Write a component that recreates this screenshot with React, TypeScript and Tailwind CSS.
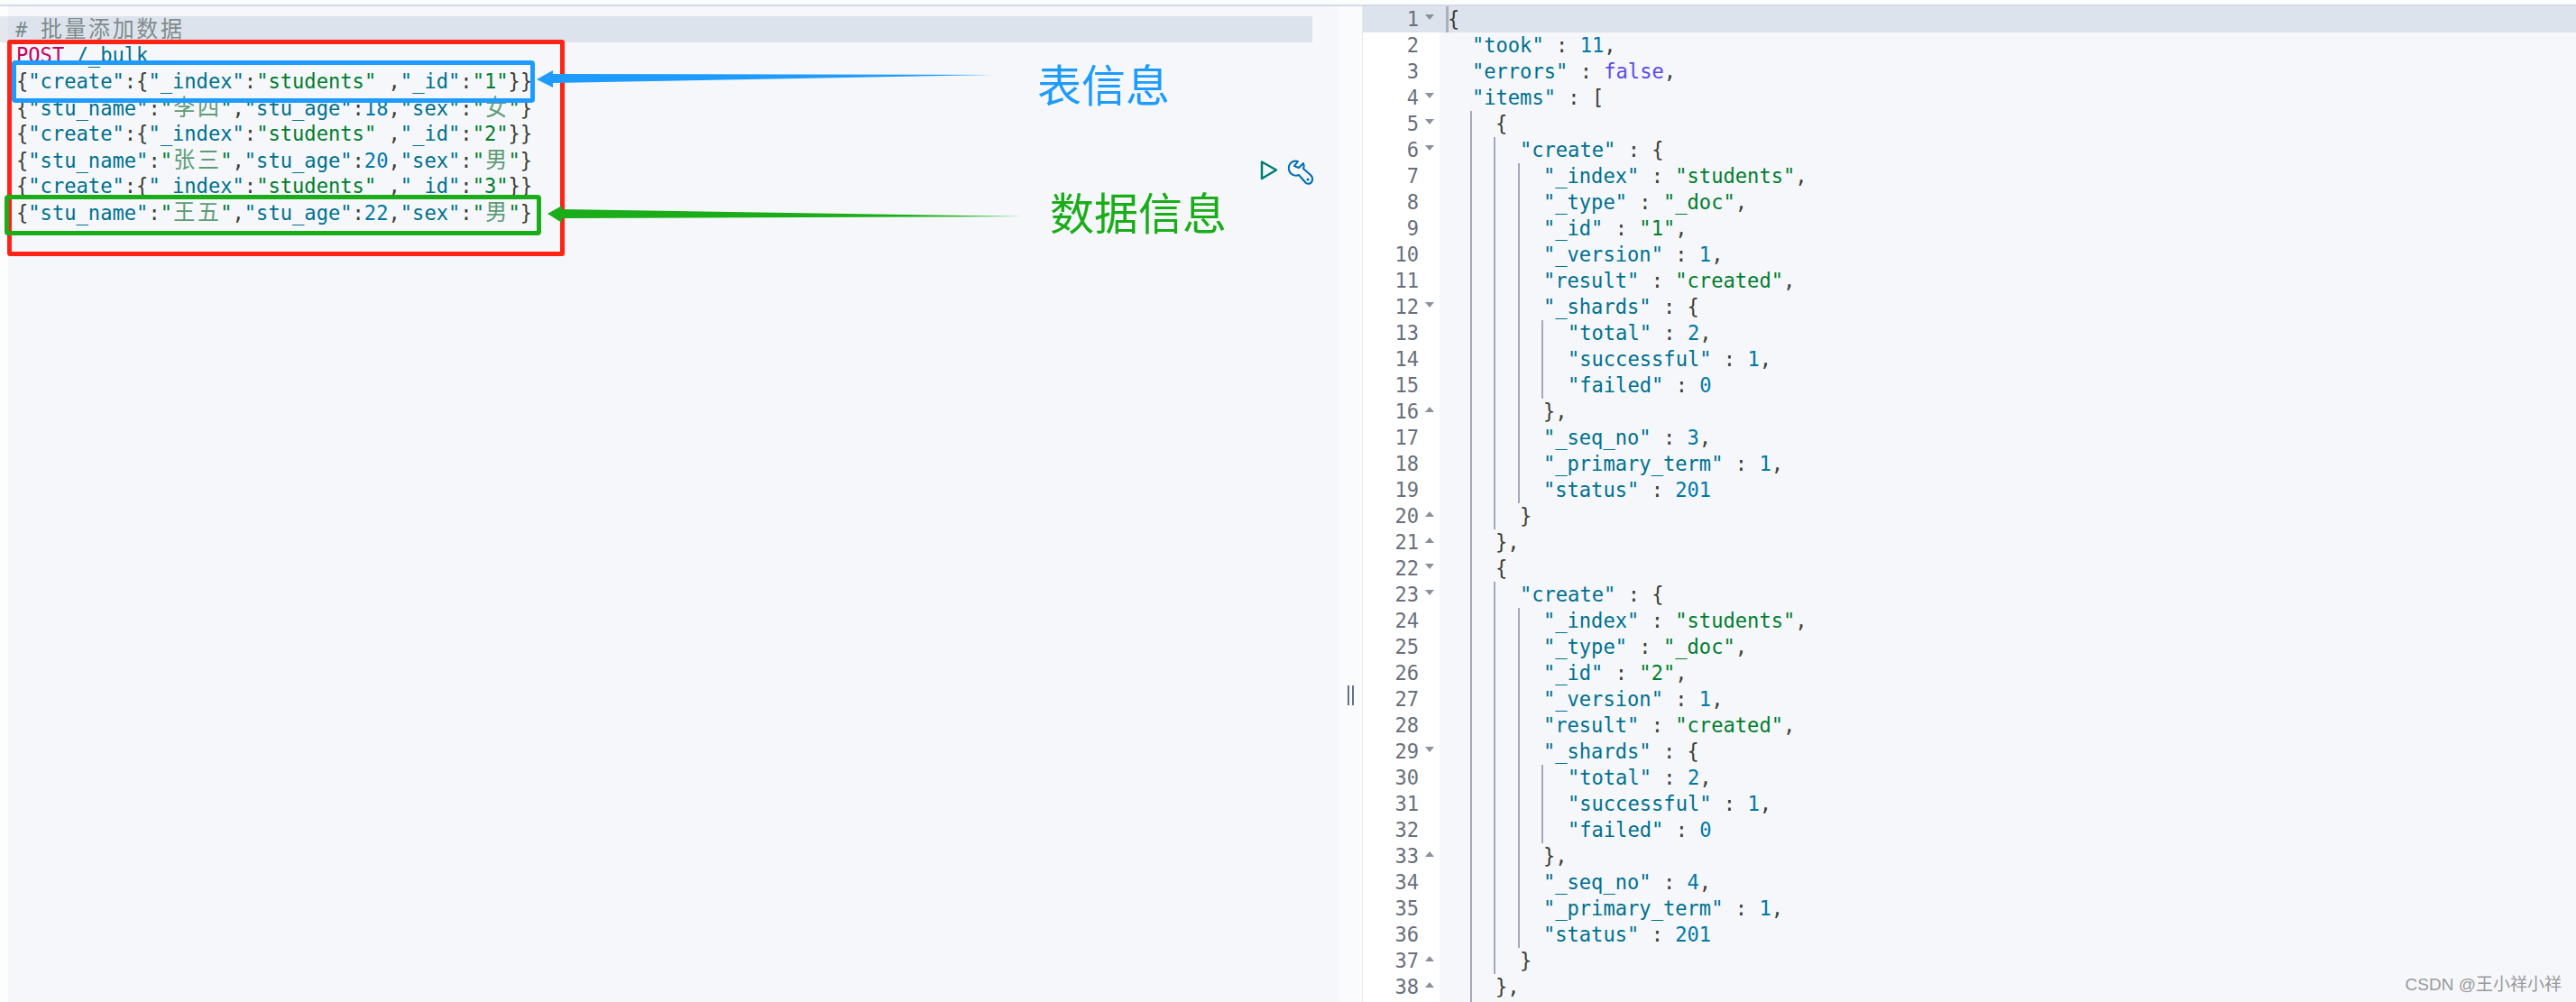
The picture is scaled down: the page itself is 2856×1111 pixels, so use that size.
import { Fragment, type ReactNode } from 'react'

const MONO = 'font-["DejaVu_Sans_Mono","Noto_Sans_CJK_SC",monospace]'

const REQUEST = [
  'POST /_bulk',
  '{"create":{"_index":"students" ,"_id":"1"}}',
  '{"stu_name":"李四","stu_age":18,"sex":"女"}',
  '{"create":{"_index":"students" ,"_id":"2"}}',
  '{"stu_name":"张三","stu_age":20,"sex":"男"}',
  '{"create":{"_index":"students" ,"_id":"3"}}',
  '{"stu_name":"王五","stu_age":22,"sex":"男"}',
]

// one create result, repeated for every document in the response
const itemLines = (id: string, seq: string): [number, string, string?][] => [
  [2, '{', 'down'],
  [3, '"create" : {', 'down'],
  [4, '"_index" : "students",'],
  [4, '"_type" : "_doc",'],
  [4, `"_id" : "${id}",`],
  [4, '"_version" : 1,'],
  [4, '"result" : "created",'],
  [4, '"_shards" : {', 'down'],
  [5, '"total" : 2,'],
  [5, '"successful" : 1,'],
  [5, '"failed" : 0'],
  [4, '},', 'up'],
  [4, `"_seq_no" : ${seq},`],
  [4, '"_primary_term" : 1,'],
  [4, '"status" : 201'],
  [3, '}', 'up'],
  [2, '},', 'up'],
]

const RESPONSE: [number, string, string?][] = [
  [0, '{', 'down'],
  [1, '"took" : 11,'],
  [1, '"errors" : false,'],
  [1, '"items" : [', 'down'],
  ...itemLines('1', '3'),
  ...itemLines('2', '4'),
  [2, '{', 'down'],
]

function Han({ ch, className }: { ch: string; className: string }) {
  return <span className={`inline-block w-[28.3px] text-center text-[25.5px] leading-[29px] ${className}`}>{ch}</span>
}

function colorize(line: string): ReactNode[] {
  const parts = line.match(/"[^"]*"(?=\s*:)|"[^"]*"|\b\d+\b|false|POST|\/_bulk|[^"\d]/g) ?? []
  return parts.map((part, i) => {
    let color = 'text-[#3f3d36]'
    if (part === 'POST') color = 'text-[#c8005f]'
    else if (part === '/_bulk') color = 'text-[#00708f]'
    else if (part === 'false') color = 'text-[#5a4be8]'
    else if (/^\d+$/.test(part)) color = 'text-[#0079a5]'
    else if (part.startsWith('"')) {
      const rest = line.slice(line.indexOf(part) + part.length)
      color = /^\s*:/.test(rest) ? 'text-[#00708f]' : 'text-[#017d2e]'
    }
    return (
      <span key={i} className={color}>
        {Array.from(part).map((ch, j) =>
          /[\u4e00-\u9fff]/.test(ch) ? <Han key={j} ch={ch} className="text-[#5f9c76]" /> : <Fragment key={j}>{ch}</Fragment>,
        )}
      </span>
    )
  })
}

function FoldArrow({ dir }: { dir: string }) {
  return (
    <svg width="10" height="6" viewBox="0 0 10 6" className="ml-[7px] mt-[-6px]">
      <path d={dir === 'down' ? 'M0 0H10L5 6Z' : 'M0 6H10L5 0Z'} fill="#8a919e" />
    </svg>
  )
}

function ResponseLine({ num, indent, text, fold }: { num: number; indent: number; text: string; fold?: string }) {
  const active = num === 1
  return (
    <div className={`flex h-[29px] ${active ? 'bg-[#dde3ec]' : ''}`}>
      <div className={`flex h-[29px] w-[85px] shrink-0 items-center ${active ? '' : 'bg-white'}`}>
        <span className="w-[62px] origin-right scale-x-[0.94] text-right text-[#69707d]">{num}</span>
        {fold && <FoldArrow dir={fold} />}
      </div>
      <div className={`ml-[7px] flex h-[29px] ${active ? 'relative' : ''}`}>
        {active && <div className="absolute left-0 top-0 h-[29px] w-[3px] bg-[#a9afbb]" />}
        {Array.from({ length: indent }).map((_, i) => (
          <span key={i} className={`block h-[29px] w-[26.6px] ${i > 0 ? 'border-l-2 border-[#a2a9b8]' : ''}`} />
        ))}
        <span className="inline-block origin-left scale-x-[0.94] whitespace-pre pl-[2px]">{colorize(text)}</span>
      </div>
    </div>
  )
}

export default function App() {
  return (
    <div className={`${MONO} h-[1111px] w-[2856px] overflow-hidden bg-[#f5f7fa] text-[23.5px] leading-[29px]`}>
      <div className="h-[7px] border-b-2 border-[#d3dae6] bg-[#fbfcfe]" />
      <div className="flex h-[1104px]">
        {/* console input */}
        <div className="relative flex w-[1484px] shrink-0">
          <div className="w-[9px] shrink-0 bg-[#fdfdfe] pt-[11px]">
            <div className="h-[29px] bg-[#e3e7ee]" />
          </div>
          <div className="w-[1446px] pt-[11px]">
            <div className="h-[29px] bg-[#dde3ec] pl-[8px]">
              <span className="inline-block origin-left scale-x-[0.94] whitespace-pre text-[#7a8a8a]">
                {'# '}
                {Array.from('批量添加数据').map((ch) => (
                  <Han key={ch} ch={ch} className="text-[#7f8c8c]" />
                ))}
              </span>
            </div>
            {REQUEST.map((line, i) => (
              <div key={i} className="h-[29px] pl-[9px]">
                <span className="inline-block origin-left scale-x-[0.94] whitespace-pre">{colorize(line)}</span>
              </div>
            ))}
          </div>

          {/* annotations drawn over the screenshot */}
          <div className="absolute left-[8px] top-[37px] h-[240px] w-[618px] rounded-[3px] border-[5px] border-[#ff2316]" />
          <div className="absolute left-[13px] top-[60px] h-[47px] w-[580px] rounded-[4px] border-[5px] border-[#1e9bff]" />
          <div className="absolute left-[5px] top-[209px] h-[45px] w-[595px] rounded-[4px] border-[5px] border-[#1aad19]" />
          <svg className="absolute left-0 top-[-7px]" width="1484" height="300">
            <polygon points="1101,83 613,82 613,78 595,88 613,97 613,92" fill="#1e9bff" />
            <polygon points="1134,240 623,232 623,228 607,237 623,247 623,242" fill="#1aad19" />
            <path d="M1399 179.5 L1415 188.5 L1399 198 Z" fill="none" stroke="#017d73" strokeWidth="2.5" strokeLinejoin="round" />
            <path
              d="M1439 179 C1433 177 1428 182 1429 188 C1430 193 1435 196 1440 194 L1448 203 C1451 205 1455 203 1455 199 C1455.5 197 1455 196 1453 194 L1445 187 C1446 185 1446 183 1445 181 L1440 186 L1435 184 Z"
              fill="none"
              stroke="#006bb4"
              strokeWidth="2"
              strokeLinejoin="round"
            />
            <circle cx="1450" cy="199" r="1.5" fill="#006bb4" />
          </svg>
          <span className="absolute left-[1150px] top-[55px] font-['Noto_Sans_CJK_SC',sans-serif] text-[49px] leading-[60px] text-[#1e9bff]">
            表信息
          </span>
          <span className="absolute left-[1164px] top-[197px] font-['Noto_Sans_CJK_SC',sans-serif] text-[49px] leading-[60px] text-[#1aad19]">
            数据信息
          </span>
        </div>

        {/* splitter */}
        <div className="flex w-[26px] shrink-0 items-start justify-center bg-[#fafbfd] pt-[753px]">
          <div className="flex gap-[3px]">
            <div className="h-[22px] w-[2px] bg-[#69707d]" />
            <div className="h-[22px] w-[2px] bg-[#69707d]" />
          </div>
        </div>

        {/* console output */}
        <div className="relative min-w-0 flex-1 overflow-hidden border-l border-[#e6e9f0]">
          {RESPONSE.map(([indent, text, fold], i) => (
            <ResponseLine key={i} num={i + 1} indent={indent} text={text} fold={fold} />
          ))}
          <span className="absolute bottom-[7px] right-[16px] font-['Liberation_Sans','Noto_Sans_CJK_SC',sans-serif] text-[19px] leading-[24px] text-[#9a9a9a]">
            CSDN @王小祥小祥
          </span>
        </div>
      </div>
    </div>
  )
}
